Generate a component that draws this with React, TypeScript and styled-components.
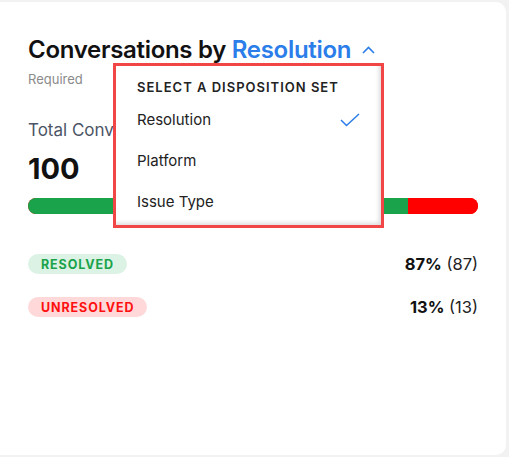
import React from "react";
import styled, { createGlobalStyle } from "styled-components";

const Global = createGlobalStyle`
  html, body { margin: 0; padding: 0; background: #f2f2f2; }
  body { font-family: Inter, "Noto Sans", sans-serif; }
`;

const Page = styled.div`
  width: 509px;
  height: 457px;
  padding: 2px 3px 2px 0;
  box-sizing: border-box;
`;

const Card = styled.div`
  position: relative;
  height: 100%;
  background: #fff;
  border-radius: 0 10px 10px 0;
  padding: 34px 28px 0 28px;
  box-sizing: border-box;
`;

const TitleRow = styled.div`
  display: flex;
  align-items: center;
  gap: 11px;
`;

const Title = styled.h2`
  margin: 0;
  font-size: 24px;
  font-weight: 600;
  color: #111;
  letter-spacing: -0.3px;
  line-height: 28px;
`;

const Accent = styled.span`
  color: #2b7de9;
`;

const Sub = styled.div`
  margin-top: 7px;
  font-size: 13px;
  color: #8a8a8a;
`;

const Label = styled.div`
  margin-top: 33px;
  font-size: 17px;
  color: #4b5566;
`;

const Total = styled.div`
  margin-top: 12px;
  font-size: 29px;
  font-weight: 700;
  color: #111;
  line-height: 34px;
`;

const Bar = styled.div`
  margin-top: 12px;
  display: flex;
  height: 16px;
  border-radius: 8px;
  overflow: hidden;
  background: #ff0000;
`;

const Segment = styled.div<{ $color: string }>`
  height: 100%;
  background: ${(p) => p.$color};
`;

const Rows = styled.div`
  margin-top: 40px;
  display: flex;
  flex-direction: column;
  gap: 23px;
`;

const Row = styled.div`
  display: flex;
  align-items: center;
  justify-content: space-between;
`;

const Badge = styled.span<{ $fg: string; $bg: string }>`
  display: inline-flex;
  align-items: center;
  height: 20px;
  padding: 0 13px;
  border-radius: 10px;
  background: ${(p) => p.$bg};
  color: ${(p) => p.$fg};
  font-size: 12.5px;
  font-weight: 700;
  letter-spacing: 0.9px;
`;

const Value = styled.span`
  font-size: 16.5px;
  color: #222;
  b { font-weight: 700; color: #111; }
`;

const Menu = styled.div`
  position: absolute;
  left: 113px;
  top: 61px;
  width: 271px;
  height: 165px;
  box-sizing: border-box;
  border: 3px solid #f24545;
  background: #fff;
  box-shadow: inset -3px -3px 4px -1px rgba(0, 0, 0, 0.14);
  padding: 12px 21px 0 21px;
`;

const MenuHeader = styled.div`
  font-size: 13px;
  font-weight: 600;
  letter-spacing: 1px;
  color: #222;
  line-height: 18px;
`;

const MenuItem = styled.div`
  display: flex;
  align-items: center;
  justify-content: space-between;
  height: 41px;
  font-size: 15px;
  color: #222;
`;

const Items = styled.div`
  margin-top: 3px;
`;

const Chevron = () => (
  <svg width="13" height="8" viewBox="0 0 13 8" fill="none">
    <path d="M1 7L6.5 1.5L12 7" stroke="#2b7de9" strokeWidth="1.6" />
  </svg>
);

const Check = () => (
  <svg width="20" height="14" viewBox="0 0 20 14" fill="none">
    <path d="M1 7L6.5 12.5L19 1" stroke="#2b7de9" strokeWidth="1.5" />
  </svg>
);

export default function App() {
  return (
    <>
      <Global />
      <Page>
        <Card>
          <TitleRow>
            <Title>
              Conversations by <Accent>Resolution</Accent>
            </Title>
            <Chevron />
          </TitleRow>
          <Sub>Required</Sub>
          <Label>Total Conversations</Label>
          <Total>100</Total>
          <Bar>
            <Segment $color="#1aa34a" style={{ width: "84.5%" }} />
            <Segment $color="#ff0000" style={{ width: "15.5%" }} />
          </Bar>
          <Rows>
            <Row>
              <Badge $fg="#1aa34a" $bg="#dcf2e4">RESOLVED</Badge>
              <Value>
                <b>87%</b> (87)
              </Value>
            </Row>
            <Row>
              <Badge $fg="#ff1010" $bg="#ffd9d9">UNRESOLVED</Badge>
              <Value>
                <b>13%</b> (13)
              </Value>
            </Row>
          </Rows>
          <Menu>
            <MenuHeader>SELECT A DISPOSITION SET</MenuHeader>
            <Items>
              <MenuItem>
                Resolution
                <Check />
              </MenuItem>
              <MenuItem>Platform</MenuItem>
              <MenuItem>Issue Type</MenuItem>
            </Items>
          </Menu>
        </Card>
      </Page>
    </>
  );
}
